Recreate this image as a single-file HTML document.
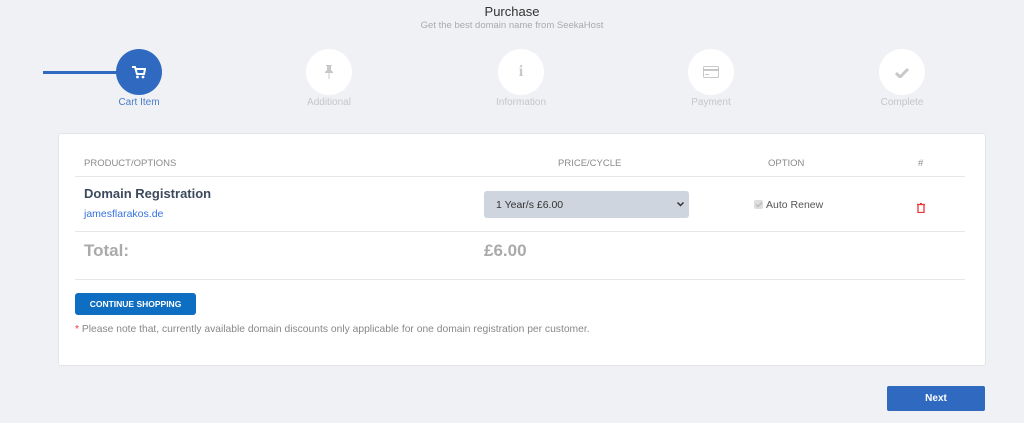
<!DOCTYPE html>
<html><head><style>
body{margin:0;width:1024px;height:423px;background:#f0f1f5;font-family:"Liberation Sans",sans-serif;position:relative;overflow:hidden}
.a{position:absolute}
.c{position:absolute;width:46px;height:46px;border-radius:50%;background:#fff;top:49px;display:flex;align-items:center;justify-content:center;color:#c8c8c8;font-size:16px;font-weight:bold}
.l{position:absolute;top:97px;font-size:10px;color:#c6c6c6;width:120px;text-align:center}
.hl{position:absolute;height:1px;background:#e6e6e6}
.h{position:absolute;top:158px;font-size:9.5px;color:#8a8a8a}
</style></head><body>
<div class="a" style="left:0;width:1024px;top:4px;text-align:center;font-size:13px;color:#333">Purchase</div>
<div class="a" style="left:0;width:1024px;top:20px;text-align:center;font-size:9.5px;color:#aaa">Get the best domain name from SeekaHost</div>
<div class="a" style="left:43px;top:71px;width:80px;height:3px;background:#2f6ac0"></div>
<div class="c" style="left:116px;background:#2f6ac0;color:#fff"><svg width="14" height="13" viewBox="0 0 14 13"><path d="M0 1h3l2 7h7l1-5H4" fill="none" stroke="#fff" stroke-width="2"/><circle cx="5.5" cy="11" r="1.4" fill="#fff"/><circle cx="11" cy="11" r="1.4" fill="#fff"/></svg></div>
<div class="c" style="left:306px"><svg width="10" height="14" viewBox="0 0 10 14"><path d="M2 0h6v1H7v4l2 2v1H1V7l2-2V1H2z" fill="#c8c8c8"/><rect x="4.5" y="8" width="1" height="6" fill="#c8c8c8"/></svg></div>
<div class="c" style="left:498px;font-family:'Liberation Serif',serif">i</div>
<div class="c" style="left:688px"><svg width="16" height="12"><rect x="0.5" y="0.5" width="15" height="11" rx="1" fill="none" stroke="#c8c8c8"/><rect x="0" y="3" width="16" height="2" fill="#c8c8c8"/><rect x="2" y="8" width="4" height="1" fill="#c8c8c8"/></svg></div>
<div class="c" style="left:879px"><svg width="14" height="11"><path d="M1 6l4 4 8-8" fill="none" stroke="#c8c8c8" stroke-width="3"/></svg></div>
<div class="l" style="left:79px;color:#4a7cc8">Cart Item</div>
<div class="l" style="left:269px">Additional</div>
<div class="l" style="left:461px">Information</div>
<div class="l" style="left:651px">Payment</div>
<div class="l" style="left:842px">Complete</div>

<div class="a" style="left:58px;top:133px;width:926px;height:231px;background:#fff;border:1px solid #e3e4e8;border-radius:3px"></div>
<div class="h" style="left:84px">PRODUCT/OPTIONS</div>
<div class="h" style="left:558px">PRICE/CYCLE</div>
<div class="h" style="left:768px">OPTION</div>
<div class="h" style="left:918px">#</div>
<div class="hl" style="left:75px;top:176px;width:890px"></div>
<div class="hl" style="left:75px;top:231px;width:890px"></div>
<div class="hl" style="left:75px;top:279px;width:890px"></div>
<div class="a" style="left:84px;top:186px;font-size:13px;color:#3d4a5c;font-weight:bold">Domain Registration</div>
<div class="a" style="left:84px;top:208px;font-size:10.5px;color:#3573e0">jamesflarakos.de</div>
<div class="a" style="left:484px;top:191px;width:205px;height:27px;background:#ced5de;border-radius:3px;font-size:10.5px;color:#333"><span style="position:absolute;left:12px;top:8px">1 Year/s £6.00</span><svg style="position:absolute;right:5px;top:11px" width="7" height="5"><path d="M0.5 0.5l3 3 3-3" fill="none" stroke="#333" stroke-width="1.5"/></svg></div>
<div class="a" style="left:754px;top:200px;width:9px;height:9px;background:#ddd;border-radius:2px"></div>
<svg class="a" style="left:755px;top:201px" width="8" height="7"><path d="M1 3.5l2 2 4-4" fill="none" stroke="#bbb" stroke-width="1.3"/></svg>
<div class="a" style="left:766px;top:199px;font-size:10.5px;color:#555">Auto Renew</div>
<svg class="a" style="left:917px;top:203px" width="8" height="10"><path d="M0 1.5h8M3 0.5h2M1 2v7.5h6V2" fill="none" stroke="#e33" stroke-width="1.3"/></svg>
<div class="a" style="left:84px;top:241px;font-size:17px;color:#aaa;font-weight:bold">Total:</div>
<div class="a" style="left:484px;top:241px;font-size:17px;color:#aaa;font-weight:bold">£6.00</div>
<div class="a" style="left:75px;top:293px;width:121px;height:22px;background:#0d6ec2;border-radius:3px;color:#fff;font-size:8.5px;font-weight:bold;text-align:center;line-height:22px">CONTINUE SHOPPING</div>
<div class="a" style="left:75px;top:324px;font-size:10.3px;color:#888"><span style="color:#e33">*</span> Please note that, currently available domain discounts only applicable for one domain registration per customer.</div>
<div class="a" style="left:887px;top:386px;width:98px;height:25px;background:#2f6ac0;border-radius:2px;color:#fff;font-size:10px;font-weight:bold;text-align:center;line-height:25px">Next</div>
</body></html>
